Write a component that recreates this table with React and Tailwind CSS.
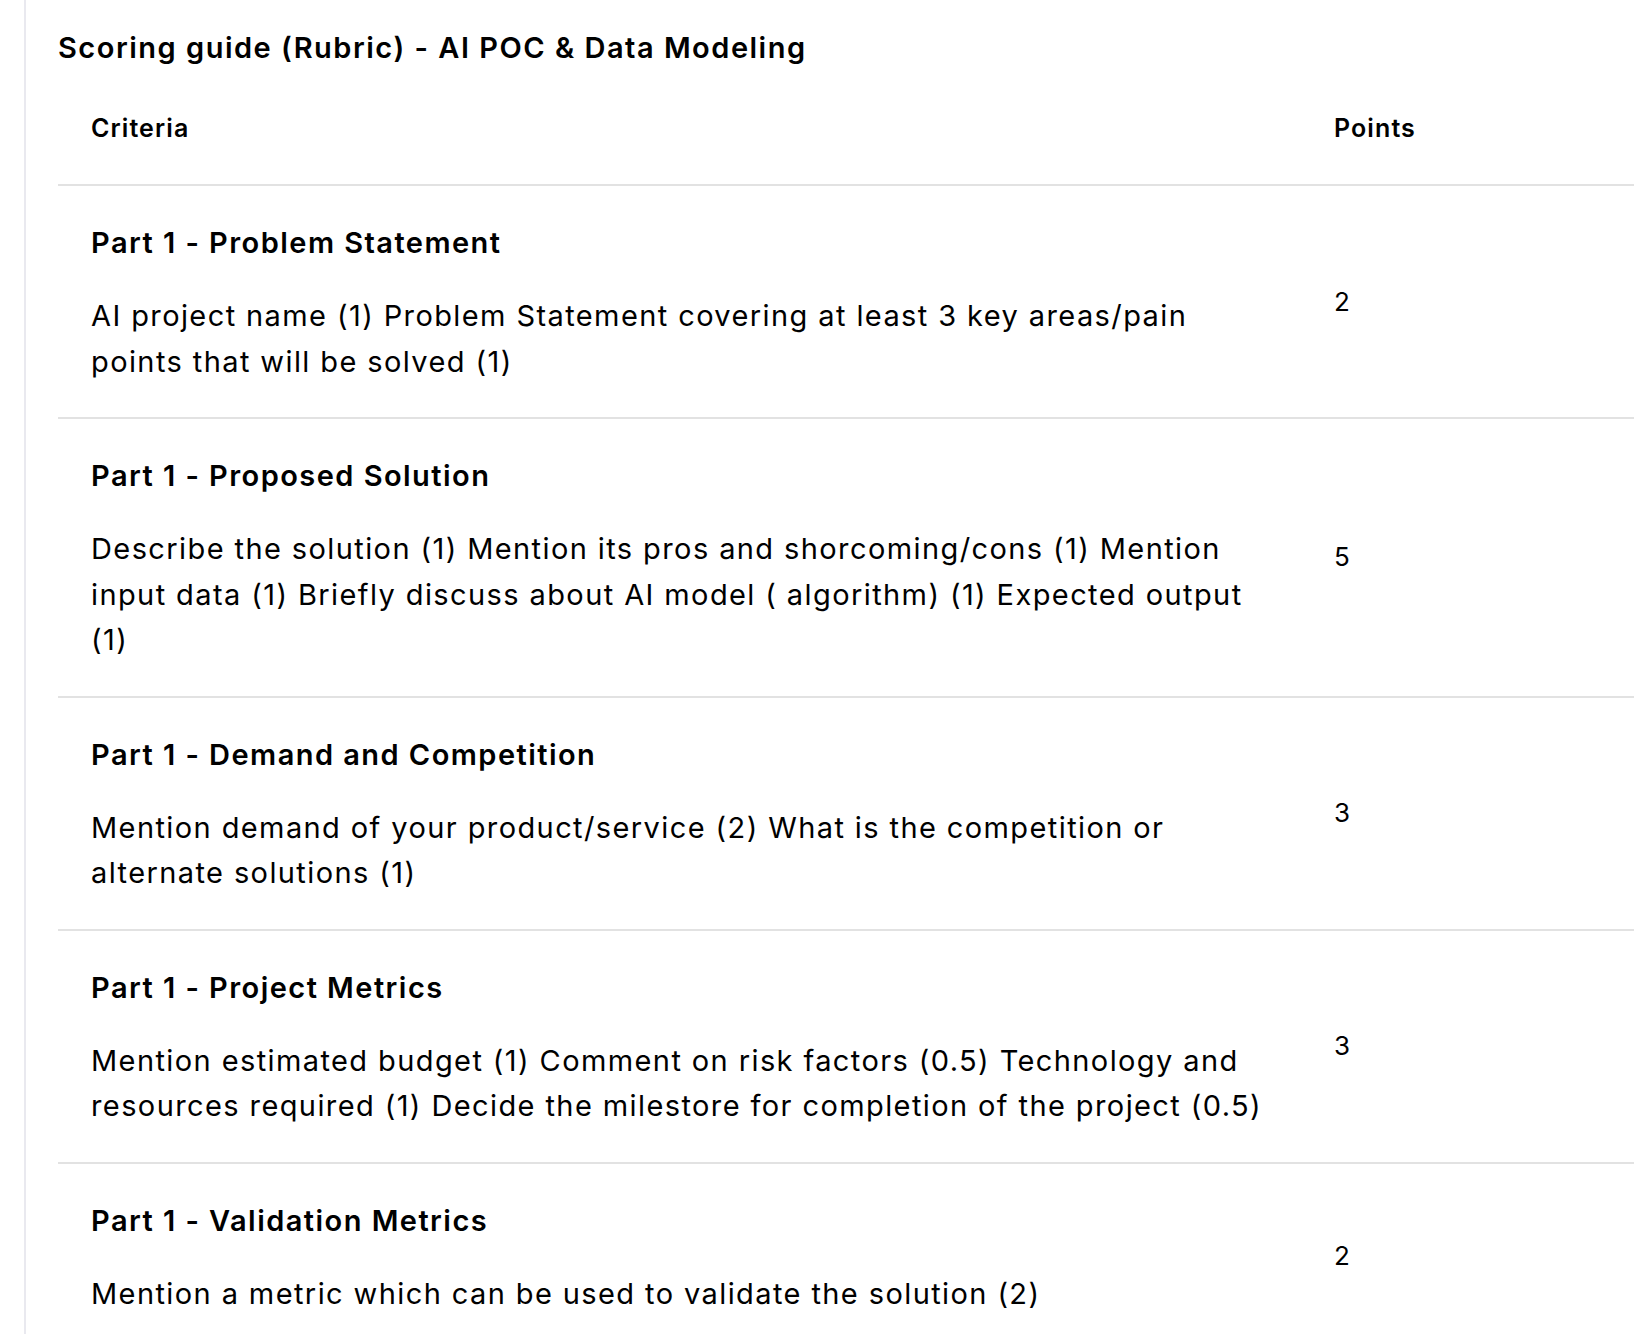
export default function App() {
  const rows = [
    {
      title: "Part 1 - Problem Statement",
      desc: "AI project name (1) Problem Statement covering at least 3 key areas/pain points that will be solved (1)",
      pts: "2",
    },
    {
      title: "Part 1 - Proposed Solution",
      desc: "Describe the solution (1) Mention its pros and shorcoming/cons (1) Mention input data (1) Briefly discuss about AI model ( algorithm) (1) Expected output (1)",
      pts: "5",
    },
    {
      title: "Part 1 - Demand and Competition",
      desc: "Mention demand of your product/service (2) What is the competition or alternate solutions (1)",
      pts: "3",
    },
    {
      title: "Part 1 - Project Metrics",
      desc: "Mention estimated budget (1) Comment on risk factors (0.5) Technology and resources required (1) Decide the milestore for completion of the project (0.5)",
      pts: "3",
    },
    {
      title: "Part 1 - Validation Metrics",
      desc: "Mention a metric which can be used to validate the solution (2)",
      pts: "2",
    },
  ];
  return (
    <div
      className="w-[1634px] h-[1334px] overflow-hidden bg-white text-black flex"
      style={{ fontFamily: "Inter, 'Noto Sans', sans-serif" }}
    >
      <div className="w-[24px] shrink-0" />
      <div className="w-[2px] shrink-0 bg-[#e9e9ef]" />
      <div className="flex-1 pl-[32px] pt-[28px]">
        <h1 className="text-[29px] leading-[40px] font-semibold tracking-[1.5px]">
          Scoring guide (Rubric) - AI POC &amp; Data Modeling
        </h1>
        <div className="mt-[4px] w-[1660px]">
          <div className="flex border-b-2 border-[#e2e2e2]">
            <div className="w-[1243px] shrink-0 px-[33px] py-[34px] text-[25px] leading-[44px] font-semibold tracking-[1.1px]">
              Criteria
            </div>
            <div className="flex-1 px-[33px] py-[34px] text-[25px] leading-[44px] font-semibold tracking-[1.1px]">
              Points
            </div>
          </div>
          {rows.map((r, i) => (
            <div key={i} className="flex border-b-2 border-[#e2e2e2]">
              <div className="w-[1243px] shrink-0 pl-[33px] pr-[30px] pt-[34px] pb-[33px]">
                <div className="text-[29px] leading-[46px] font-semibold tracking-[1.45px]">
                  {r.title}
                </div>
                <div className="mt-[27px] text-[29px] leading-[45.5px] font-normal tracking-[1.4px]">
                  {r.desc}
                </div>
              </div>
              <div className="flex-1 px-[33px] flex items-center text-[26px] leading-[44px] tracking-[0.7px]">
                {r.pts}
              </div>
            </div>
          ))}
        </div>
      </div>
    </div>
  );
}
